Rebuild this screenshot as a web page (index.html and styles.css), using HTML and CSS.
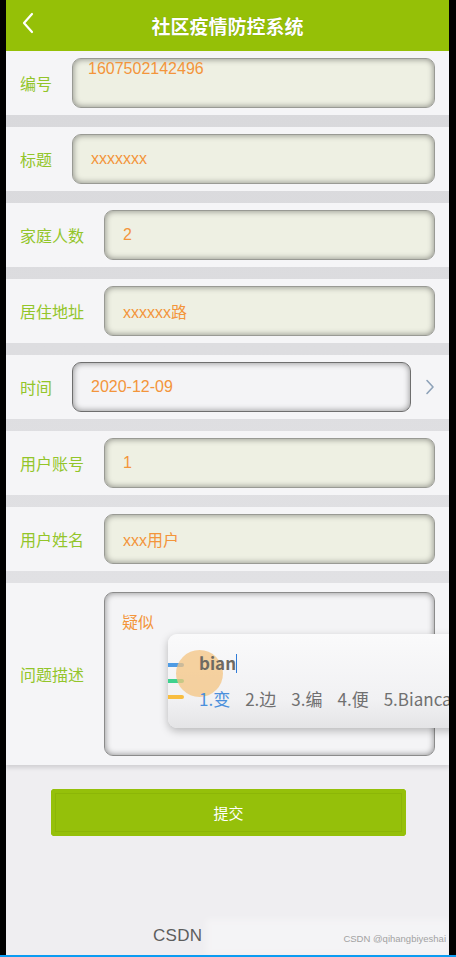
FILE: index.html
```html
<!DOCTYPE html>
<html lang="zh">
<head>
  <meta charset="UTF-8" />
  <meta name="viewport" content="width=device-width, initial-scale=1.0" />
  <title>社区疫情防控系统</title>
  <link rel="stylesheet" href="styles.css">
</head>
<body>
  <div class="phone">
    <header class="topbar">
      <span class="back">
        <svg width="16" height="22" viewBox="0 0 16 22"><path d="M12 2 L4 11 L12 20" fill="none" stroke="#fff" stroke-width="2.2" stroke-linecap="round" stroke-linejoin="round"/></svg>
      </span>
      <h1>社区疫情防控系统</h1>
    </header>

    <div class="form">
      <div class="row">
        <label>编号</label>
        <div class="field field-top">1607502142496</div>
      </div>
      <div class="row">
        <label>标题</label>
        <div class="field">xxxxxxx</div>
      </div>
      <div class="row">
        <label>家庭人数</label>
        <div class="field">2</div>
      </div>
      <div class="row">
        <label>居住地址</label>
        <div class="field">xxxxxx路</div>
      </div>
      <div class="row">
        <label>时间</label>
        <div class="field field-date">2020-12-09</div>
        <span class="arrow">
          <svg width="10" height="16" viewBox="0 0 10 16"><path d="M2 1.5 L8 8 L2 14.5" fill="none" stroke="#8ea2b8" stroke-width="1.6" stroke-linecap="round" stroke-linejoin="round"/></svg>
        </span>
      </div>
      <div class="row">
        <label>用户账号</label>
        <div class="field">1</div>
      </div>
      <div class="row">
        <label>用户姓名</label>
        <div class="field">xxx用户</div>
      </div>
      <div class="row row-area">
        <label>问题描述</label>
        <div class="field field-area">疑似</div>
      </div>
    </div>

    <div class="ime">
      <div class="ime-bars">
        <span class="bar blue"></span>
        <span class="bar green"></span>
        <span class="bar yellow"></span>
      </div>
      <span class="ime-dot"></span>
      <div class="ime-text">
        <div class="ime-input">bian<span class="caret"></span></div>
        <div class="ime-list">
          <span class="pick">1.变</span>
          <span>2.边</span>
          <span>3.编</span>
          <span>4.便</span>
          <span>5.Bianca</span>
        </div>
      </div>
    </div>

    <div class="actions">
      <button class="submit">提交</button>
    </div>

    <div class="footer">
      <span class="mark">CSDN</span>
      <span class="haze"></span>
      <span class="credit">CSDN @qihangbiyeshai</span>
    </div>
  </div>
  <div class="strip"></div>
</body>
</html>
```

FILE: styles.css
```css
* {
  box-sizing: border-box;
}
body {
  margin: 0;
  background: #000;
  font-family: "Liberation Sans", "Noto Sans CJK SC", sans-serif;
}
.phone {
  position: relative;
  width: 443px;
  height: 955px;
  margin-left: 6px;
  background: #efeef1;
  overflow: hidden;
}
.strip {
  height: 2px;
  background: #0b9cf2;
}
.topbar {
  height: 51px;
  background: #95c007;
  display: flex;
  align-items: center;
  justify-content: center;
  position: relative;
}
.topbar h1 {
  margin: 0;
  color: #fff;
  font-family: "Noto Sans CJK SC", sans-serif;
  font-size: 19px;
  font-weight: 700;
  text-shadow: 0 0 1px rgba(0, 0, 0, 0.25);
}
.back {
  position: absolute;
  left: 14px;
  top: 12px;
}
.form {
  display: flex;
  flex-direction: column;
  gap: 12px;
  background: linear-gradient(#d8d8db, #e4e4e7);
  box-shadow: 0 3px 4px rgba(0, 0, 0, 0.12);
}
.row {
  display: flex;
  align-items: center;
  height: 64px;
  padding: 7px 14px;
  background: #f5f5f7;
}
.row label {
  flex: none;
  margin-right: 20px;
  font-family: "Noto Sans CJK SC", sans-serif;
  font-size: 16px;
  color: #93c52a;
}
.field {
  flex: 1;
  height: 50px;
  display: flex;
  align-items: center;
  padding: 0 18px;
  border-radius: 9px;
  background: #eef0e3;
  border: 1px solid #999a94;
  box-shadow: inset 0 0 6px rgba(0, 0, 0, 0.45);
  color: #f3953b;
  font-size: 16px;
}
.field-top {
  align-items: flex-start;
  padding: 1px 15px;
}
.field-date {
  background: #f4f4f6;
  border-color: #6e6e6e;
}
.arrow {
  flex: none;
  width: 24px;
  display: flex;
  padding-left: 14px;
}
.row-area {
  height: 182px;
  padding: 9px 14px;
}
.field-area {
  height: 164px;
  align-items: flex-start;
  padding: 16px 17px;
  background: #f4f4f6;
  border-color: #8b8b8b;
}
.ime {
  position: absolute;
  left: 162px;
  top: 634px;
  width: 320px;
  height: 94px;
  border-radius: 9px;
  background: linear-gradient(#fafafb, #f1f1f3 70%, #e4e4e6);
  box-shadow: 0 3px 8px rgba(0, 0, 0, 0.25);
  display: flex;
}
.ime-bars {
  display: flex;
  flex-direction: column;
  gap: 12px;
  padding-top: 29px;
}
.bar {
  width: 16px;
  height: 4px;
  border-radius: 0 2px 2px 0;
}
.blue { background: #4f9be4; }
.green { background: #3ed28f; }
.yellow { background: #f8bd40; }
.ime-dot {
  position: absolute;
  left: 8px;
  top: 16px;
  width: 47px;
  height: 47px;
  border-radius: 50%;
  background: rgba(244, 196, 130, 0.75);
}
.ime-text {
  position: relative;
  padding: 17px 0 0 15px;
  font-family: "Noto Sans CJK SC", sans-serif;
}
.ime-input {
  font-size: 17px;
  font-weight: 700;
  color: #6f6a62;
  line-height: 24px;
}
.caret {
  display: inline-block;
  width: 1px;
  height: 19px;
  background: #2f7bd8;
  vertical-align: -3px;
}
.ime-list {
  display: flex;
  gap: 15px;
  margin-top: 11px;
  font-size: 17px;
  color: #707070;
  white-space: nowrap;
}
.ime-list .pick {
  color: #4a8fdc;
}
.actions {
  display: flex;
  padding: 24px 0 0 45px;
}
.submit {
  width: 355px;
  height: 47px;
  border: none;
  border-radius: 4px;
  background: #95c00a;
  box-shadow: inset 0 0 0 4px #95c00a, inset 0 0 0 5px #8cb607;
  color: #fff;
  font-family: "Noto Sans CJK SC", sans-serif;
  font-size: 15px;
}
.footer {
  position: absolute;
  left: 0;
  right: 0;
  bottom: 0;
  height: 36px;
}
.mark {
  position: absolute;
  left: 147px;
  top: 7px;
  font-size: 17px;
  color: #5d5d5d;
  letter-spacing: 0.3px;
}
.haze {
  position: absolute;
  left: 200px;
  top: 0;
  right: 0;
  bottom: 0;
  background: rgba(255, 255, 255, 0.35);
  filter: blur(3px);
}
.credit {
  position: absolute;
  right: 3px;
  top: 14px;
  font-size: 9.5px;
  color: #a2a2a2;
}
```
